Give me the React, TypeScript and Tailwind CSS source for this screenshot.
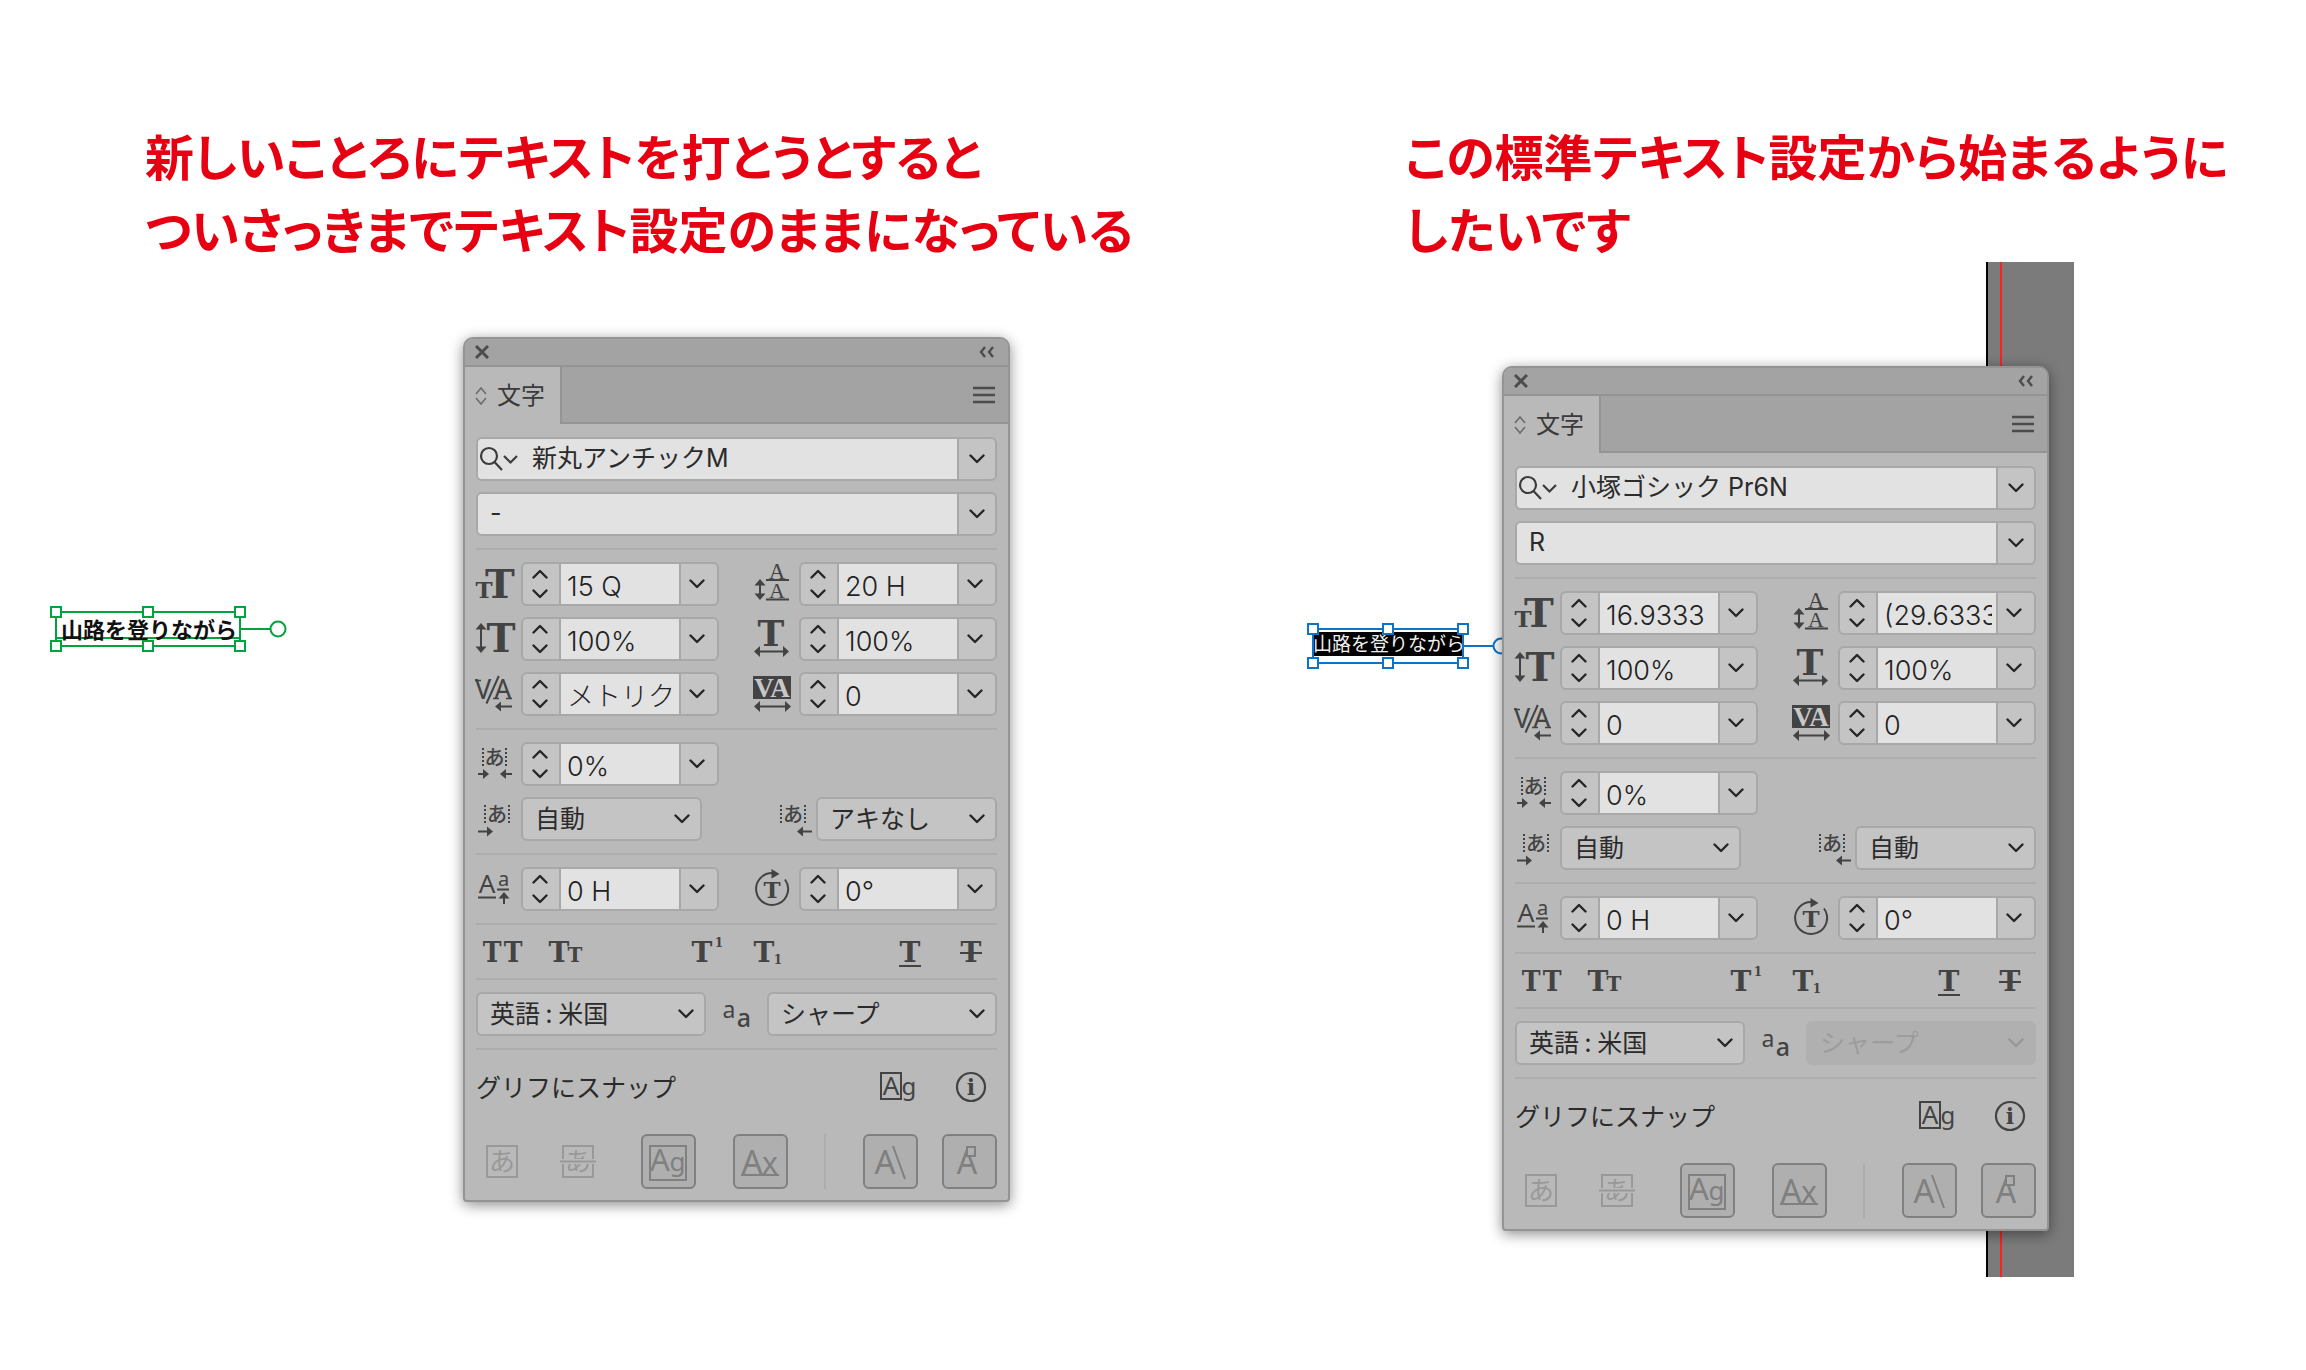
import { useId, type ReactNode } from 'react'

type CharacterSettings = {
  family: string
  style: string
  size: string
  leading: string
  kerning: string
  akiAfter: string
  antialiasDisabled?: boolean
}

const slab = 'DejaVu Serif'
const serif = 'Liberation Serif'
const sans = 'Noto Sans'
const jp = 'Noto Sans CJK JP'

/* ---------- small shared drawings ---------- */

function Chevron({ up = false }: { up?: boolean }) {
  return (
    <svg width="16" height="10" viewBox="0 0 16 10" fill="none" stroke="currentColor" strokeWidth="2.4" strokeLinecap="round" strokeLinejoin="round" aria-hidden="true">
      <path d={up ? 'M1.5 8.5 8 2l6.5 6.5' : 'M1.5 1.5 8 8l6.5-6.5'} />
    </svg>
  )
}

function Glyph({ x, y, size, font, weight = 400, fill = 'currentColor', children }: {
  x: number
  y: number
  size: number
  font: string
  weight?: number
  fill?: string
  children: string
}) {
  return (
    <text x={x} y={y} fontSize={size} fontFamily={font} fontWeight={weight} textAnchor="middle" fill={fill} stroke="none">
      {children}
    </text>
  )
}

function RowIcon({ children }: { children: ReactNode }) {
  return (
    <svg width="45" height="44" viewBox="0 0 45 44" fill="none" stroke="currentColor" strokeWidth="2" className="overflow-visible" aria-hidden="true">
      {children}
    </svg>
  )
}

function VerticalArrows({ x, top, bottom }: { x: number; top: number; bottom: number }) {
  return (
    <g>
      <path d={`M${x} ${top + 4}V${bottom - 4}`} />
      <path d={`M${x} ${top}l5.5 6.5h-11zM${x} ${bottom}l5.5-6.5h-11z`} fill="currentColor" stroke="none" />
    </g>
  )
}

function HorizontalArrows({ y, left, right }: { y: number; left: number; right: number }) {
  return (
    <g>
      <path d={`M${left + 4} ${y}H${right - 4}`} />
      <path d={`M${left} ${y}l6-5.5v11zM${right} ${y}l-6-5.5v11z`} fill="currentColor" stroke="none" />
    </g>
  )
}

function ArrowTo({ from, to, y }: { from: number; to: number; y: number }) {
  const back = to > from ? -6 : 6
  return (
    <g>
      <path d={`M${from} ${y}H${to + back / 2}`} />
      <path d={`M${to} ${y}l${back}-5v10z`} fill="currentColor" stroke="none" />
    </g>
  )
}

function DottedKana({ left, right, y }: { left: number; right: number; y: number }) {
  return (
    <g>
      <path d={`M${left} ${y}v19M${right} ${y}v19`} strokeDasharray="2 2" />
      <Glyph x={(left + right) / 2} y={y + 17} size={20} font={jp} weight={500}>あ</Glyph>
    </g>
  )
}

/* ---------- row icons ---------- */

const SizeIcon = () => (
  <RowIcon>
    <Glyph x={24} y={36} size={40} font={slab} weight={700}>T</Glyph>
    <Glyph x={8} y={36} size={23} font={slab} weight={700}>T</Glyph>
  </RowIcon>
)

const LeadingIcon = () => (
  <RowIcon>
    <VerticalArrows x={6} top={17} bottom={38} />
    <Glyph x={23} y={17} size={23} font={serif}>A</Glyph>
    <Glyph x={23} y={36} size={22} font={serif}>A</Glyph>
    <path d="M12 18h23M12 37.500h23" />
  </RowIcon>
)

const VerticalScaleIcon = () => (
  <RowIcon>
    <VerticalArrows x={5} top={6} bottom={36} />
    <Glyph x={25} y={35} size={39} font={slab} weight={700}>T</Glyph>
  </RowIcon>
)

const HorizontalScaleIcon = () => (
  <RowIcon>
    <Glyph x={17} y={29} size={36} font={slab} weight={700}>T</Glyph>
    <HorizontalArrows y={34.5} left={0} right={35} />
  </RowIcon>
)

const KerningIcon = () => (
  <RowIcon>
    <Glyph x={7} y={27} size={27} font={sans}>V</Glyph>
    <Glyph x={27} y={27} size={27} font={sans}>A</Glyph>
    <path d="M22.800 4 10.500 31.500" />
    <path d="M-1 8.500h6M17 26.500h6M30 26.500h6" strokeWidth="1.500" />
    <ArrowTo from={36} to={19} y={34.5} />
  </RowIcon>
)

const TrackingIcon = () => (
  <RowIcon>
    <path d="M-1 4h38v23H-1z" fill="currentColor" stroke="none" />
    <Glyph x={10} y={25} size={27} font={serif} weight={700} fill="#c8c8c8">V</Glyph>
    <Glyph x={26} y={25} size={27} font={serif} weight={700} fill="#c8c8c8">A</Glyph>
    <HorizontalArrows y={34.5} left={0} right={37} />
  </RowIcon>
)

const TsumeIcon = () => (
  <RowIcon>
    <DottedKana left={7} right={30} y={6} />
    <ArrowTo from={2} to={13} y={32} />
    <ArrowTo from={36} to={24} y={32} />
  </RowIcon>
)

const AkiBeforeIcon = () => (
  <RowIcon>
    <DottedKana left={9} right={33} y={8} />
    <ArrowTo from={2} to={17} y={34.5} />
  </RowIcon>
)

const AkiAfterIcon = () => (
  <RowIcon>
    <DottedKana left={10} right={34} y={8} />
    <ArrowTo from={41} to={26} y={34.5} />
  </RowIcon>
)

const BaselineIcon = () => (
  <RowIcon>
    <Glyph x={11} y={26} size={26} font={sans}>A</Glyph>
    <Glyph x={27.5} y={19} size={20} font={sans}>a</Glyph>
    <path d="M2 30.500h18M21 22.500h12M28 28v9" />
    <path d="M28 25l5.500 6.500h-11z" fill="currentColor" stroke="none" />
  </RowIcon>
)

const RotateIcon = () => (
  <RowIcon>
    <path d="M31 12.500A16 16 0 1 1 19 6" />
    <path d="M25.500 7l-8 4.500V2z" fill="currentColor" stroke="none" />
    <Glyph x={18} y={31} size={23} font={slab} weight={700}>T</Glyph>
  </RowIcon>
)

/* ---------- form controls ---------- */

const arrowCell = 'flex w-[38px] shrink-0 items-center justify-center border-l-2 border-[#a8a8a8] text-[#262626]'

function Stepper({ label, icon, value }: { label: string; icon: ReactNode; value: string }) {
  const id = useId()
  return (
    <div className="flex h-11 w-[243px] text-[#434343]">
      <label htmlFor={id} className="w-[45px] shrink-0" aria-label={label}>{icon}</label>
      <div className="flex min-w-0 flex-1 overflow-hidden rounded-md border-2 border-[#a8a8a8] bg-[#c4c4c4]">
        <div className="flex w-[38px] shrink-0 flex-col border-r-2 border-[#a8a8a8] pr-0.5 text-[#262626]">
          <button type="button" aria-label={`${label} +`} className="flex flex-1 items-center justify-center"><Chevron up /></button>
          <button type="button" aria-label={`${label} -`} className="flex flex-1 items-center justify-center"><Chevron /></button>
        </div>
        <input id={id} aria-label={label} defaultValue={value} className="w-full min-w-0 flex-1 bg-[#e2e2e2] pt-1.5 pr-1 pl-1.5 font-['Inter','Noto_Sans_CJK_JP',sans-serif] text-[27px] font-light text-[#222] outline-none" />
        <button type="button" aria-label={`${label} ▾`} className={`${arrowCell} pr-1`}><Chevron /></button>
      </div>
    </div>
  )
}

function ComboField({ label, value, search = false }: { label: string; value: string; search?: boolean }) {
  return (
    <div className="flex h-11 overflow-hidden rounded-md border-2 border-[#a8a8a8] bg-[#c4c4c4]">
      <div className="flex min-w-0 flex-1 items-center bg-[#e2e2e2]">
        {search && (
          <svg width="42" height="28" viewBox="0 0 42 28" fill="none" stroke="#3c3c3c" strokeWidth="2.200" className="shrink-0" aria-hidden="true">
            <circle cx="11" cy="11" r="8" />
            <path d="M16.500 17 24 25M26 11l6.500 6.500L39 11" />
          </svg>
        )}
        <input aria-label={label} defaultValue={value} className="min-w-0 flex-1 bg-transparent pl-3 font-['Inter','Noto_Sans_CJK_JP',sans-serif] text-[25px] text-[#2b2b2b] outline-none" />
      </div>
      <button type="button" aria-label={`${label} ▾`} className={arrowCell}><Chevron /></button>
    </div>
  )
}

function Dropdown({ label, value, disabled = false }: { label: string; value: string; disabled?: boolean }) {
  return (
    <div className="relative h-11 min-w-0 flex-1 text-[#262626]">
      <select
        aria-label={label}
        disabled={disabled}
        defaultValue={value}
        className="h-full w-full appearance-none rounded-md border-2 border-[#a8a8a8] bg-[#c4c4c4] pb-0.5 pl-3 text-[25px] text-[#2b2b2b] outline-none disabled:border-[#b0b0b0] disabled:bg-[#b0b0b0] disabled:text-[#9c9c9c] disabled:opacity-100"
      >
        <option>{value}</option>
      </select>
      <span className={`pointer-events-none absolute inset-y-0 right-3 flex items-center ${disabled ? 'text-[#979797]' : ''}`}>
        <Chevron />
      </span>
    </div>
  )
}

function IconButton({ label, children }: { label: string; children: ReactNode }) {
  return (
    <button type="button" aria-label={label} className="w-10">
      <svg width="40" height="40" viewBox="0 0 40 40" fill="none" stroke="currentColor" strokeWidth="2" className="overflow-visible" aria-hidden="true">
        {children}
      </svg>
    </button>
  )
}

function SnapButton({ label, active = false, children }: { label: string; active?: boolean; children: ReactNode }) {
  return (
    <button
      type="button"
      aria-label={label}
      className={active
        ? 'flex size-[55px] items-center justify-center rounded-md border-2 border-[#808080] bg-[#afafaf] text-[#808080]'
        : 'flex h-[55px] w-[52px] items-center justify-center text-[#999]'}
    >
      <svg width="40" height="40" viewBox="0 0 40 40" fill="none" stroke="currentColor" strokeWidth="2" className="overflow-visible" aria-hidden="true">
        {children}
      </svg>
    </button>
  )
}

const Divider = () => <hr className="border-t-2 border-[#adadad]" />

/* ---------- panel ---------- */

function CharacterPanel({ settings }: { settings: CharacterSettings }) {
  return (
    <section className="relative w-[547px] shrink-0 rounded-t-[10px] rounded-b-sm border-2 border-[#949494] bg-[#b9b9b9] font-['Noto_Sans_CJK_JP',sans-serif] text-[#434343] shadow-[0_3px_14px_rgba(0,0,0,0.45)]">
      <header className="rounded-t-lg bg-[#a3a3a3]">
        <div className="flex h-7 items-center justify-between border-b-2 border-[#949494] pr-3.5 pl-2.5 text-[#4c4c4c]">
          <button type="button" aria-label="close">
            <svg width="14" height="14" viewBox="0 0 14 14" stroke="currentColor" strokeWidth="3" aria-hidden="true">
              <path d="M1 1l12 12M13 1 1 13" />
            </svg>
          </button>
          <button type="button" aria-label="collapse">
            <svg width="15" height="12" viewBox="0 0 15 12" fill="none" stroke="currentColor" strokeWidth="2.400" aria-hidden="true">
              <path d="M6 1 2 6l4 5M14 1l-4 5 4 5" />
            </svg>
          </button>
        </div>
        <div className="flex h-[57px]">
          <div className="flex w-[97px] items-center gap-2.5 border-r-2 border-[#949494] bg-[#b9b9b9] pl-2.5">
            <svg width="12" height="20" viewBox="0 0 12 20" fill="none" stroke="#6c6c6c" strokeWidth="1.600" aria-hidden="true">
              <path d="M1 8l5-6 5 6M1 12l5 6 5-6" />
            </svg>
            <h3 className="pb-1 text-[24px] leading-8 whitespace-nowrap text-[#3a3a3a]">文字</h3>
          </div>
          <div className="flex flex-1 items-center justify-end border-b-2 border-[#949494] pr-[13px]">
            <button type="button" aria-label="menu">
              <svg width="22" height="18" viewBox="0 0 22 18" stroke="#4c4c4c" strokeWidth="2.400" aria-hidden="true">
                <path d="M0 2h22M0 9h22M0 16h22" />
              </svg>
            </button>
          </div>
        </div>
      </header>

      <div className="flex flex-col gap-3 px-[11px] pt-[13px] pb-[11px]">
        <div className="flex flex-col gap-[11px]">
          <ComboField label="フォント" value={settings.family} search />
          <ComboField label="スタイル" value={settings.style} />
        </div>
        <Divider />
        <div className="flex flex-col gap-[11px]">
          <div className="flex justify-between">
            <Stepper label="サイズ" icon={<SizeIcon />} value={settings.size} />
            <Stepper label="行送り" icon={<LeadingIcon />} value={settings.leading} />
          </div>
          <div className="flex justify-between">
            <Stepper label="垂直比率" icon={<VerticalScaleIcon />} value="100%" />
            <Stepper label="水平比率" icon={<HorizontalScaleIcon />} value="100%" />
          </div>
          <div className="flex justify-between">
            <Stepper label="カーニング" icon={<KerningIcon />} value={settings.kerning} />
            <Stepper label="トラッキング" icon={<TrackingIcon />} value="0" />
          </div>
        </div>
        <Divider />
        <div className="flex flex-col gap-[11px]">
          <Stepper label="文字ツメ" icon={<TsumeIcon />} value="0%" />
          <div className="flex justify-between">
            <div className="flex w-[226px]">
              <div className="w-[45px] shrink-0"><AkiBeforeIcon /></div>
              <Dropdown label="アキを挿入（左）" value="自動" />
            </div>
            <div className="flex w-[226px]">
              <div className="w-[45px] shrink-0"><AkiAfterIcon /></div>
              <Dropdown label="アキを挿入（右）" value={settings.akiAfter} />
            </div>
          </div>
        </div>
        <Divider />
        <div className="flex justify-between">
          <Stepper label="ベースライン" icon={<BaselineIcon />} value="0 H" />
          <Stepper label="文字回転" icon={<RotateIcon />} value="0°" />
        </div>
        <Divider />

        {/* Case, script and line styles */}
        <div className="-my-1.5 flex h-[41px] items-end justify-between px-1.5">
          <div className="flex gap-[21px]">
            <IconButton label="オールキャップス">
              <Glyph x={10} y={30} size={28} font="DejaVu Serif Condensed" weight={700}>T</Glyph>
              <Glyph x={31} y={30} size={28} font="DejaVu Serif Condensed" weight={700}>T</Glyph>
            </IconButton>
            <IconButton label="スモールキャップス">
              <Glyph x={16} y={30} size={28} font={slab} weight={700}>T</Glyph>
              <Glyph x={32} y={30} size={20} font={slab} weight={700}>T</Glyph>
            </IconButton>
          </div>
          <div className="flex gap-[21px]">
            <IconButton label="上付き文字">
              <Glyph x={16} y={30} size={28} font={slab} weight={700}>T</Glyph>
              <Glyph x={33} y={15} size={12} font={slab} weight={700}>1</Glyph>
            </IconButton>
            <IconButton label="下付き文字">
              <Glyph x={17} y={30} size={28} font={slab} weight={700}>T</Glyph>
              <Glyph x={31} y={32} size={12} font={slab} weight={700}>1</Glyph>
            </IconButton>
          </div>
          <div className="flex gap-[21px]">
            <IconButton label="下線">
              <Glyph x={20} y={30} size={28} font={slab} weight={700}>T</Glyph>
              <path d="M9 34h22" />
            </IconButton>
            <IconButton label="打ち消し線">
              <Glyph x={20} y={30} size={28} font={slab} weight={700}>T</Glyph>
              <path d="M9 21h22" />
            </IconButton>
          </div>
        </div>
        <Divider />

        <div className="flex items-center">
          <Dropdown label="言語" value="英語 : 米国" />
          <svg width="61" height="44" viewBox="0 0 61 44" className="shrink-0" aria-hidden="true">
            <Glyph x={23} y={26} size={23} font={sans}>a</Glyph>
            <Glyph x={38} y={35} size={25} font={sans} weight={500}>a</Glyph>
          </svg>
          <Dropdown label="アンチエイリアス" value="シャープ" disabled={settings.antialiasDisabled} />
        </div>
        <Divider />

        {/* Snap to glyph */}
        <div>
          <div className="flex h-[50px] items-center justify-between pr-1.5">
            <h4 className="pb-0.5 text-[25px] leading-8 text-[#2b2b2b]">グリフにスナップ</h4>
            <div className="flex gap-[34px]">
              <IconButton label="グリフ境界">
                <path d="M4 6h20v26H4z" />
                <Glyph x={14} y={28} size={26} font={sans}>A</Glyph>
                <Glyph x={32} y={28} size={24} font={sans}>g</Glyph>
              </IconButton>
              <IconButton label="情報">
                <circle cx="20" cy="20" r="14" strokeWidth="2.200" />
                <Glyph x={20} y={28} size={22} font={slab} weight={700}>i</Glyph>
              </IconButton>
            </div>
          </div>
          <div className="mt-[22px] flex items-center justify-between">
            <div className="flex gap-6">
              <SnapButton label="仮想ボディ">
                <path d="M5 4h30v31H5z" />
                <Glyph x={20} y={29} size={26} font={jp}>あ</Glyph>
              </SnapButton>
              <SnapButton label="仮想ボディの中央">
                <path d="M5 4h30v31H5z" />
                <Glyph x={20} y={29} size={26} font={jp}>あ</Glyph>
                <path d="M2 19.500h36" stroke="#b9b9b9" strokeWidth="5" />
                <path d="M2 19.500h36" />
              </SnapButton>
            </div>
            <SnapButton label="グリフの境界" active>
              <path d="M2 4h36v34H2z" />
              <Glyph x={12} y={29} size={31} font={sans}>A</Glyph>
              <Glyph x={29.5} y={29} size={26} font={sans}>g</Glyph>
            </SnapButton>
            <SnapButton label="ベースラインとエックスハイト" active>
              <path d="M1 33h38" />
              <Glyph x={12} y={32} size={33} font={sans}>A</Glyph>
              <Glyph x={30} y={32} size={30} font={sans}>x</Glyph>
            </SnapButton>
            <div className="h-[55px] w-0.5 bg-[#adadad]" />
            <div className="flex gap-6">
              <SnapButton label="角度" active>
                <Glyph x={14} y={32} size={33} font={sans}>A</Glyph>
                <path d="M22 4l12 33" />
              </SnapButton>
              <SnapButton label="アンカーポイント" active>
                <Glyph x={17} y={32} size={32} font={sans}>A</Glyph>
                <path d="M17 5h8v9h-8z" fill="#afafaf" />
              </SnapButton>
            </div>
          </div>
        </div>
      </div>
    </section>
  )
}

/* ---------- selected point text on the artboard ---------- */

function SelectionHandles({ width, reach, className }: { width: number; reach: number; className: string }) {
  return (
    <svg width={width} height="34" viewBox={`0 0 ${width} 34`} fill="none" stroke="currentColor" strokeWidth="2" className={`absolute inset-0 overflow-visible ${className}`} aria-hidden="true">
      <path d={`M0 0h${width}v34H0zM${width} 17h${reach - 8}`} />
      <circle cx={width + reach} cy="17" r="7.500" fill="#fff" />
      <g fill="#fff">
        {[0, width / 2, width].map((x) => (
          <path key={x} d={`M${x - 5} -5h10v10h-10zM${x - 5} 29h10v10h-10z`} />
        ))}
      </g>
    </svg>
  )
}

const heading = "font-['Noto_Sans_CJK_JP',sans-serif] text-[49px] leading-[73px] font-bold whitespace-nowrap text-[#e60012] [font-feature-settings:'palt']"

export default function App() {
  return (
    <main className="grid min-h-screen grid-cols-[1260fr_1046fr] bg-white">
      <section className="pt-[118px]">
        <h2 className={`${heading} pl-[145px]`}>
          新しいことろにテキストを打とうとすると
          <br />
          ついさっきまでテキスト設定のままになっている
        </h2>
        <div className="mt-[73px] flex items-start gap-[223px] pl-14">
          <div className="relative mt-[275px] h-[34px] w-[184px] shrink-0">
            <p className="h-[27px] border-b-2 border-[#00a33e] pl-0.5 text-center font-['Noto_Sans_CJK_JP',sans-serif] text-[22px] leading-[33px] font-bold whitespace-nowrap text-[#111]">
              山路を登りながら
            </p>
            <SelectionHandles width={184} reach={38} className="text-[#00a33e]" />
          </div>
          <CharacterPanel
            settings={{ family: '新丸アンチックM', style: '-', size: '15 Q', leading: '20 H', kerning: 'メトリクス', akiAfter: 'アキなし' }}
          />
        </div>
      </section>

      <section className="relative pt-[118px]">
        {/* Pasteboard beyond the artboard edge, with its bleed guide */}
        <div className="absolute top-[262px] left-[726px] flex h-[1015px] w-[88px] border-l-2 border-black bg-[#7b7b7b] pl-3">
          <div className="w-0.5 bg-[#ff2020]" />
        </div>
        <h2 className={`${heading} relative pl-[145px]`}>
          この標準テキスト設定から始まるように
          <br />
          したいです
        </h2>
        <div className="relative mt-[102px] flex items-start gap-[39px] pl-[53px]">
          <div className="relative mt-[263px] h-[34px] w-[150px] shrink-0 pt-[3px]">
            <p className="h-6 bg-black text-center font-['Noto_Sans_CJK_JP',sans-serif] text-[19px] leading-[22px] whitespace-nowrap text-[#eee]">
              山路を登りながら
            </p>
            <SelectionHandles width={150} reach={38} className="text-[#0c74c8]" />
          </div>
          <CharacterPanel
            settings={{ family: '小塚ゴシック Pr6N', style: 'R', size: '16.9333', leading: '(29.6333 H)', kerning: '0', akiAfter: '自動', antialiasDisabled: true }}
          />
        </div>
      </section>
    </main>
  )
}
